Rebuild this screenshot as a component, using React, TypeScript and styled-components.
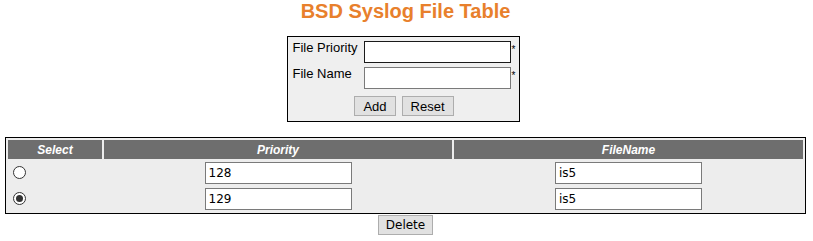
import { Fragment } from "react";
import styled, { createGlobalStyle } from "styled-components";

const GlobalStyle = createGlobalStyle`
  body {
    margin: 0;
    background: #ffffff;
    font-family: "Liberation Sans", Arial, sans-serif;
    color: #000;
  }
`;

const Page = styled.div`
  display: flex;
  flex-direction: column;
  align-items: center;
`;

const Title = styled.h1`
  margin: 0 2px 0 0;
  font-size: 20px;
  line-height: 23px;
  font-weight: bold;
  color: #e8802c;
`;

const FormBox = styled.div`
  margin-top: 13px;
  margin-left: -7px;
  width: 233px;
  box-sizing: border-box;
  border: 1px solid #000;
  background: #efefef;
  padding: 4px 3px 5px 5px;
`;

const FieldGrid = styled.div`
  display: grid;
  grid-template-columns: 71px 147px auto;
  row-gap: 4px;
  align-items: start;
`;

const Label = styled.label`
  font-size: 13px;
  line-height: 15px;
  margin-top: -1px;
`;

interface FieldProps {
  dark?: boolean;
}

const TextField = styled.input<FieldProps>`
  width: 147px;
  height: 22px;
  box-sizing: border-box;
  margin: 0;
  padding: 0 3px;
  border: 1px solid ${(props) => (props.dark ? "#1a1a1a" : "#7a7a7a")};
  background: #fff;
  font-family: "DejaVu Sans", Tahoma, sans-serif;
  font-size: 12px;
  outline: none;
`;

const Required = styled.span`
  font-size: 10px;
  line-height: 10px;
  padding: 4px 0 0 1px;
`;

const ButtonRow = styled.div`
  display: flex;
  justify-content: center;
  gap: 6px;
  margin-top: 7px;
`;

const Button = styled.button`
  height: 20px;
  margin: 0;
  padding: 0 8px;
  background: #e1e1e1;
  border: 1px solid #adadad;
  border-radius: 0;
  font-family: "Liberation Sans", Arial, sans-serif;
  font-size: 13px;
  color: #000;
  cursor: pointer;
`;

const Table = styled.div`
  margin-top: 15px;
  margin-left: -2px;
  width: 801px;
  box-sizing: border-box;
  display: grid;
  grid-template-columns: 94px 348px 1fr;
  gap: 2px;
  padding: 2px;
  border: 1px solid #000;
  background: #ededed;
`;

const HeadCell = styled.div`
  height: 19px;
  background: #6e6e6e;
  color: #fff;
  font-size: 12px;
  font-weight: bold;
  font-style: italic;
  display: flex;
  align-items: center;
  justify-content: center;
`;

interface CellProps {
  center?: boolean;
}

const Cell = styled.div<CellProps>`
  height: 24px;
  display: flex;
  align-items: center;
  justify-content: ${(props) => (props.center ? "center" : "flex-start")};
`;

const Radio = styled.input`
  appearance: none;
  width: 13px;
  height: 13px;
  margin: 0 0 2px 5px;
  box-sizing: border-box;
  border: 1px solid #333;
  border-radius: 50%;
  background: #fff;
  display: grid;
  place-items: center;

  &:checked::after {
    content: "";
    width: 7px;
    height: 7px;
    border-radius: 50%;
    background: #333;
  }
`;

const DeleteButton = styled(Button)`
  margin: 1px 2px 0 0;
  padding: 0 7px;
  font-family: "DejaVu Sans", Tahoma, sans-serif;
  font-size: 12px;
`;

const rows = [
  { priority: "128", fileName: "is5", checked: false },
  { priority: "129", fileName: "is5", checked: true },
];

export default function App() {
  return (
    <>
      <GlobalStyle />
      <Page>
        <Title>BSD Syslog File Table</Title>
        <FormBox>
          <FieldGrid>
            <Label>File Priority</Label>
            <TextField dark />
            <Required>*</Required>
            <Label>File Name</Label>
            <TextField />
            <Required>*</Required>
          </FieldGrid>
          <ButtonRow>
            <Button>Add</Button>
            <Button>Reset</Button>
          </ButtonRow>
        </FormBox>
        <Table>
          <HeadCell>Select</HeadCell>
          <HeadCell>Priority</HeadCell>
          <HeadCell>FileName</HeadCell>
          {rows.map((row, i) => (
            <Fragment key={i}>
              <Cell>
                <Radio type="radio" name="sel" defaultChecked={row.checked} />
              </Cell>
              <Cell center>
                <TextField defaultValue={row.priority} />
              </Cell>
              <Cell center>
                <TextField defaultValue={row.fileName} />
              </Cell>
            </Fragment>
          ))}
        </Table>
        <DeleteButton>Delete</DeleteButton>
      </Page>
    </>
  );
}
